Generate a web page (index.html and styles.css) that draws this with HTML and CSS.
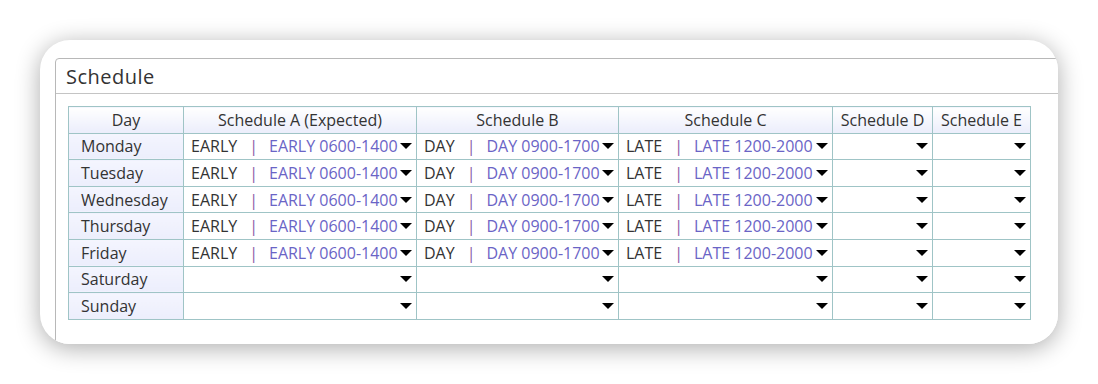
FILE: index.html
```html
<!DOCTYPE html>
<html>
<head>
<meta charset="utf-8">
<link rel="stylesheet" href="styles.css">
</head>
<body>
<div class="page">
  <div class="card">
    <div class="panel">
      <div class="panel-head">Schedule</div>
      <div class="panel-body">
        <table class="sched">
          <colgroup>
            <col class="c-day"><col class="c-a"><col class="c-b"><col class="c-c"><col class="c-d"><col class="c-e">
          </colgroup>
          <thead>
            <tr><th>Day</th><th>Schedule A (Expected)</th><th>Schedule B</th><th>Schedule C</th><th>Schedule D</th><th>Schedule E</th></tr>
          </thead>
          <tbody>
            <tr><td class="day">Monday</td>
              <td><div class="sel"><span class="code">EARLY</span><span class="sep">|</span><span class="name">EARLY 0600-1400</span><span class="caret"></span></div></td>
              <td><div class="sel"><span class="code">DAY</span><span class="sep">|</span><span class="name">DAY 0900-1700</span><span class="caret"></span></div></td>
              <td><div class="sel"><span class="code">LATE</span><span class="sep">|</span><span class="name">LATE 1200-2000</span><span class="caret"></span></div></td>
              <td><div class="sel"><span class="caret"></span></div></td>
              <td><div class="sel"><span class="caret"></span></div></td></tr>
            <tr><td class="day">Tuesday</td>
              <td><div class="sel"><span class="code">EARLY</span><span class="sep">|</span><span class="name">EARLY 0600-1400</span><span class="caret"></span></div></td>
              <td><div class="sel"><span class="code">DAY</span><span class="sep">|</span><span class="name">DAY 0900-1700</span><span class="caret"></span></div></td>
              <td><div class="sel"><span class="code">LATE</span><span class="sep">|</span><span class="name">LATE 1200-2000</span><span class="caret"></span></div></td>
              <td><div class="sel"><span class="caret"></span></div></td>
              <td><div class="sel"><span class="caret"></span></div></td></tr>
            <tr><td class="day">Wednesday</td>
              <td><div class="sel"><span class="code">EARLY</span><span class="sep">|</span><span class="name">EARLY 0600-1400</span><span class="caret"></span></div></td>
              <td><div class="sel"><span class="code">DAY</span><span class="sep">|</span><span class="name">DAY 0900-1700</span><span class="caret"></span></div></td>
              <td><div class="sel"><span class="code">LATE</span><span class="sep">|</span><span class="name">LATE 1200-2000</span><span class="caret"></span></div></td>
              <td><div class="sel"><span class="caret"></span></div></td>
              <td><div class="sel"><span class="caret"></span></div></td></tr>
            <tr><td class="day">Thursday</td>
              <td><div class="sel"><span class="code">EARLY</span><span class="sep">|</span><span class="name">EARLY 0600-1400</span><span class="caret"></span></div></td>
              <td><div class="sel"><span class="code">DAY</span><span class="sep">|</span><span class="name">DAY 0900-1700</span><span class="caret"></span></div></td>
              <td><div class="sel"><span class="code">LATE</span><span class="sep">|</span><span class="name">LATE 1200-2000</span><span class="caret"></span></div></td>
              <td><div class="sel"><span class="caret"></span></div></td>
              <td><div class="sel"><span class="caret"></span></div></td></tr>
            <tr><td class="day">Friday</td>
              <td><div class="sel"><span class="code">EARLY</span><span class="sep">|</span><span class="name">EARLY 0600-1400</span><span class="caret"></span></div></td>
              <td><div class="sel"><span class="code">DAY</span><span class="sep">|</span><span class="name">DAY 0900-1700</span><span class="caret"></span></div></td>
              <td><div class="sel"><span class="code">LATE</span><span class="sep">|</span><span class="name">LATE 1200-2000</span><span class="caret"></span></div></td>
              <td><div class="sel"><span class="caret"></span></div></td>
              <td><div class="sel"><span class="caret"></span></div></td></tr>
            <tr><td class="day">Saturday</td>
              <td><div class="sel"><span class="caret"></span></div></td>
              <td><div class="sel"><span class="caret"></span></div></td>
              <td><div class="sel"><span class="caret"></span></div></td>
              <td><div class="sel"><span class="caret"></span></div></td>
              <td><div class="sel"><span class="caret"></span></div></td></tr>
            <tr><td class="day">Sunday</td>
              <td><div class="sel"><span class="caret"></span></div></td>
              <td><div class="sel"><span class="caret"></span></div></td>
              <td><div class="sel"><span class="caret"></span></div></td>
              <td><div class="sel"><span class="caret"></span></div></td>
              <td><div class="sel"><span class="caret"></span></div></td></tr>
          </tbody>
        </table>
      </div>
    </div>
  </div>
</div>
</body>
</html>
```

FILE: styles.css
```css
html, body {
  margin: 0;
  padding: 0;
  background: #ffffff;
}

.page {
  padding: 40px;
}

.card {
  height: 304px;
  background: #ffffff;
  border-radius: 30px;
  box-shadow: 0 4px 24px rgba(0, 0, 0, 0.33);
  overflow: hidden;
  padding: 18px 0 0 15px;
  box-sizing: border-box;
}

.panel {
  margin-right: -30px;
  height: 320px;
  border: 1px solid #b8b8b8;
  border-radius: 4px;
  background: #ffffff;
}

.panel-head {
  height: 35px;
  box-sizing: border-box;
  padding: 4px 0 0 10px;
  border-bottom: 1px solid #c4c4c4;
  font-family: "Open Sans", "Noto Sans", sans-serif;
  font-size: 20px;
  letter-spacing: 0.5px;
  color: #333333;
}

.panel-body {
  padding: 12px 0 0 12px;
}

.sched {
  border-collapse: collapse;
  table-layout: fixed;
  width: 962px;
  font-family: "Open Sans", "Noto Sans", sans-serif;
  font-size: 16px;
  color: #333333;
}

.c-day { width: 115px; }
.c-a { width: 233px; }
.c-b { width: 202px; }
.c-c { width: 214px; }
.c-d { width: 100px; }
.c-e { width: 98px; }

.sched th,
.sched td {
  border: 1px solid #9fc4c6;
  height: 25.6px;
  padding: 0;
  white-space: nowrap;
  overflow: hidden;
}

.sched th {
  font-weight: normal;
  text-align: center;
  background: linear-gradient(#ffffff, #ebedfb);
}

.sched td.day {
  padding-left: 12px;
  background: linear-gradient(#f4f5fe, #eceefc);
}

.sel {
  display: flex;
  align-items: center;
  padding: 0 4px 0 7px;
}

.sep {
  color: #8b5da8;
  margin: 0 11px 0 12px;
}

.name {
  color: #6a64c6;
}

.caret {
  margin-left: auto;
  width: 0;
  height: 0;
  border-left: 6.5px solid transparent;
  border-right: 6.5px solid transparent;
  border-top: 6.5px solid #000000;
}
```
